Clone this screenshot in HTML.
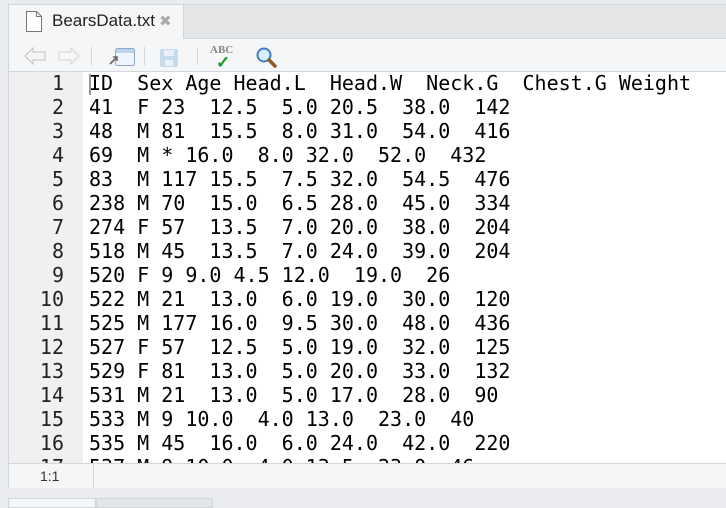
<!DOCTYPE html>
<html><head><meta charset="utf-8"><style>
*{margin:0;padding:0;box-sizing:border-box}
body{width:726px;height:504px;background:#e9ebee;position:relative;overflow:hidden;font-family:"Liberation Sans",sans-serif}
#frame{position:absolute;left:8px;top:4px;width:730px;height:483px;border:1px solid #d3d6da;background:#f4f6f8}
#tabbar{position:absolute;left:0;top:0;right:0;height:34px;background:#e4e5e7;border-bottom:1px solid #d3d6da}
#tab{position:absolute;left:0;top:0;width:175px;height:35px;background:#f4f6f8;border-right:1px solid #d3d6da}
#tab .t{position:absolute;left:43px;top:6px;font-size:17px;color:#222}
#tab .x{position:absolute;left:150px;top:7px;font-size:15px;color:#aaa}
#toolbar{position:absolute;left:0;top:34px;right:0;height:33px;background:#f4f6f8;border-bottom:1px solid #d3d6da}
.sep{position:absolute;top:8px;width:1px;height:18px;background:#d3d6da}
#editor{position:absolute;left:0;top:67px;right:0;height:391px;background:#fff;overflow:hidden}
#gutter{position:absolute;left:0;top:0;width:74px;height:100%;background:#f0f0f0}
pre{font-family:"DejaVu Sans Mono","Liberation Mono",monospace;font-size:20px;line-height:24px;tab-size:2;-moz-tab-size:2;color:#000}
#nums{position:absolute;left:0;top:-1px;width:55px;text-align:right;color:#222}
#code{position:absolute;left:80px;top:-1px}
#cursor{position:absolute;left:80px;top:2px;width:2px;height:21px;background:#999}
#status{position:absolute;left:0;top:458px;right:0;height:25px;background:#f4f6f8;border-top:1px solid #d3d6da}
#status .p{position:absolute;left:31px;top:4px;font-size:14px;color:#333}
#status .d{position:absolute;left:84px;top:0;width:1px;height:24px;background:#d3d6da}
#btabs{position:absolute;left:8px;top:498px;width:88px;height:10px;background:#f4f6f8;border:1px solid #d3d6da}
#btabs2{position:absolute;left:96px;top:498px;width:117px;height:10px;background:#e4e5e7;border:1px solid #d3d6da}
</style></head><body>
<div id="frame">
 <div id="tabbar">
  <div id="tab">
   <svg style="position:absolute;left:17px;top:6px" width="16" height="21" viewBox="0 0 16 21"><path d="M0.5 0.5H10.5L15.5 5.5V20.5H0.5Z" fill="#fff" stroke="#777"/><path d="M10.5 0.5V5.5H15.5" fill="none" stroke="#777"/></svg>
   <span class="t">BearsData.txt</span><span class="x">✖</span>
  </div>
 </div>
 <div id="toolbar">
  <svg style="position:absolute;left:15px;top:8px" width="56" height="18" viewBox="0 0 56 18"><path d="M1 9L9 1V5H21V13H9V17Z" fill="#f6f6f6" stroke="#c0c0c0"/><path d="M55 9L47 1V5H35V13H47V17Z" fill="#f6f6f6" stroke="#d4d4d4"/></svg>
  <div class="sep" style="left:82px"></div>
  <svg style="position:absolute;left:98px;top:8px" width="30" height="20" viewBox="0 0 30 20"><rect x="8.5" y="1.5" width="19" height="17" rx="2" fill="#eef4fb" stroke="#8fa9c4"/><rect x="9" y="2" width="18" height="4" fill="#bcd3ec"/><path d="M3 17L10 10M6 10H10V14" stroke="#666" stroke-width="1.6" fill="none"/></svg>
  <div class="sep" style="left:135px"></div>
  <svg style="position:absolute;left:150px;top:9px" width="20" height="20" viewBox="0 0 20 20"><rect x="1" y="1" width="18" height="18" rx="2" fill="#c7dbef"/><rect x="5" y="2" width="10" height="6" fill="#e8f0f8"/><rect x="6" y="12" width="8" height="6" fill="#e8f0f8"/></svg>
  <div class="sep" style="left:188px"></div>
  <div style="position:absolute;left:201px;top:5px;font-family:'Liberation Serif',serif;font-size:11px;color:#888;font-weight:bold">ABC</div>
  <div style="position:absolute;left:207px;top:14px;font-size:17px;color:#1a9a2a;font-weight:bold">✓</div>
  <svg style="position:absolute;left:246px;top:7px" width="24" height="24" viewBox="0 0 24 24"><circle cx="9" cy="9" r="6.5" fill="#d9ecfa" stroke="#3f7fc0" stroke-width="2"/><path d="M14 14L20 20" stroke="#8a5a20" stroke-width="3.5" stroke-linecap="round"/></svg>
 </div>
 <div id="editor">
  <div id="gutter"></div>
<pre id="nums">1
2
3
4
5
6
7
8
9
10
11
12
13
14
15
16
17</pre>
<pre id="code">ID	Sex	Age	Head.L	Head.W	Neck.G	Chest.G	Weight
41	F	23	12.5	5.0	20.5	38.0	142
48	M	81	15.5	8.0	31.0	54.0	416
69	M	*	16.0	8.0	32.0	52.0	432
83	M	117	15.5	7.5	32.0	54.5	476
238	M	70	15.0	6.5	28.0	45.0	334
274	F	57	13.5	7.0	20.0	38.0	204
518	M	45	13.5	7.0	24.0	39.0	204
520	F	9	9.0	4.5	12.0	19.0	26
522	M	21	13.0	6.0	19.0	30.0	120
525	M	177	16.0	9.5	30.0	48.0	436
527	F	57	12.5	5.0	19.0	32.0	125
529	F	81	13.0	5.0	20.0	33.0	132
531	M	21	13.0	5.0	17.0	28.0	90
533	M	9	10.0	4.0	13.0	23.0	40
535	M	45	16.0	6.0	24.0	42.0	220
537	M	9	10.0	4.0	13.5	23.0	46</pre>
  <div id="cursor"></div>
 </div>
 <div id="status"><span class="p">1:1</span><div class="d"></div></div>
</div>
<div id="btabs"></div><div id="btabs2"></div>
</body></html>
